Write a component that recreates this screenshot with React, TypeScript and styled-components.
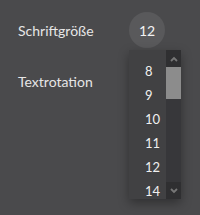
import React from 'react';
import styled, {createGlobalStyle} from 'styled-components';

const GlobalStyle = createGlobalStyle`
  html, body {
    margin: 0;
    padding: 0;
    background: #4a4a4c;
  }
  body {
    font-family: Lato, "Open Sans", sans-serif;
  }
`

const Panel = styled.div`
  width: 200px;
  height: 215px;
  background: #4a4a4c;
  padding: 12px 0 0 18px;
  box-sizing: border-box;
  display: flex;
  flex-direction: column;
  gap: 15px;
`

const Row = styled.div`
  display: flex;
  align-items: center;
  height: 36px;
  position: relative;
`

const Label = styled.span`
  color: #e6e6e6;
  font-size: 14px;
  width: 111px;
`

const ValueBubble = styled.div`
  width: 36px;
  height: 36px;
  border-radius: 50%;
  background: #59595b;
  color: #f2f2f2;
  font-size: 14px;
  display: flex;
  align-items: center;
  justify-content: center;
`

const Dropdown = styled.div`
  position: absolute;
  left: 111px;
  top: 38px;
  width: 52px;
  height: 149px;
  display: flex;
  background: #414143;
  box-shadow: 0 4px 10px rgba(0, 0, 0, 0.35);
  z-index: 2;
`

const Options = styled.ul`
  list-style: none;
  margin: 0;
  padding: 9px 0 0 16px;
  flex: 1;
  overflow: hidden;
`

const Option = styled.li`
  color: #f0f0f0;
  font-size: 13px;
  height: 24px;
  line-height: 24px;
`

const Scrollbar = styled.div`
  width: 15px;
  background: #37373a;
  display: flex;
  flex-direction: column;
`

const ScrollButton = styled.div`
  height: 17px;
  background: #2f2f31;
  display: flex;
  align-items: center;
  justify-content: center;
`

const Track = styled.div`
  flex: 1;
`

const Thumb = styled.div`
  height: 32px;
  background: #8c8c8c;
`

const Chevron = ({up}: {up?: boolean}) => (
  <svg width="8" height="6" viewBox="0 0 8 6">
    <path
      d={up ? 'M1 5 L4 2 L7 5' : 'M1 1 L4 4 L7 1'}
      stroke="#777"
      strokeWidth="1.8"
      fill="none"
    />
  </svg>
)

const sizes = [8, 9, 10, 11, 12, 14]

export default function App(): React.ReactElement {
  return (
    <>
      <GlobalStyle/>
      <Panel>
        <Row>
          <Label>Schriftgröße</Label>
          <ValueBubble>12</ValueBubble>
          <Dropdown>
            <Options>
              {sizes.map(s => <Option key={s}>{s}</Option>)}
            </Options>
            <Scrollbar>
              <ScrollButton><Chevron up/></ScrollButton>
              <Track><Thumb/></Track>
              <ScrollButton><Chevron/></ScrollButton>
            </Scrollbar>
          </Dropdown>
        </Row>
        <Row>
          <Label>Textrotation</Label>
        </Row>
      </Panel>
    </>
  )
}
